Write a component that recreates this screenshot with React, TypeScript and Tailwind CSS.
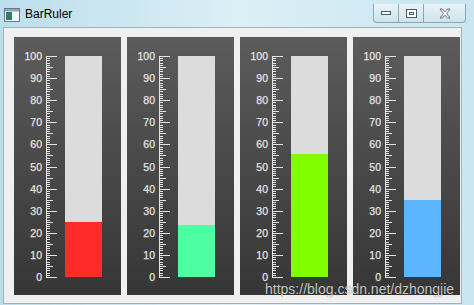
import React from "react";

type Gauge = {
  value: number;
  color: string;
};

const gauges: Gauge[] = [
  { value: 25, color: "#ff2a2a" },
  { value: 23.5, color: "#4dffa0" },
  { value: 55.5, color: "#80ff00" },
  { value: 35, color: "#5cb6ff" },
];

const BAR_HEIGHT = 221;
const TOP = 8;

function Ruler() {
  const step = BAR_HEIGHT / 100;
  const ticks = [];
  for (let i = 0; i <= 100; i++) {
    const y = Math.round(TOP + (100 - i) * step) + 0.5;
    const len = i % 10 === 0 ? 11 : i % 5 === 0 ? 7 : 4;
    ticks.push(
      <line key={i} x1={32} x2={32 + len} y1={y} y2={y} stroke="#e4e4e4" strokeWidth={1} />
    );
  }
  const labels = [];
  for (let v = 0; v <= 100; v += 10) {
    const y = TOP + (100 - v) * step;
    labels.push(
      <text
        key={v}
        x={28}
        y={y + 4}
        textAnchor="end"
        fontSize={10.5}
        fill="#e2e2e2"
        stroke="#e2e2e2"
        strokeWidth={0.25}
        fontFamily="'Liberation Sans', Arial, sans-serif"
      >
        {v}
      </text>
    );
  }
  return (
    <svg width={51} height={BAR_HEIGHT + 16} className="shrink-0">
      <line x1={32.5} x2={32.5} y1={TOP} y2={TOP + BAR_HEIGHT + 1} stroke="#e4e4e4" strokeWidth={1} />
      {ticks}
      {labels}
    </svg>
  );
}

function GaugePanel({ value, color }: Gauge) {
  return (
    <div className="flex h-[258px] w-[107px] shrink-0 items-start bg-gradient-to-b from-[#5c5c5c] to-[#363636] pt-[11px]">
      <Ruler />
      <div className="mt-[8px] flex h-[221px] w-[37px] flex-col justify-end bg-[#dcdcdc]">
        <div style={{ height: `${value}%`, backgroundColor: color }} />
      </div>
    </div>
  );
}

function AppIcon() {
  return (
    <svg width={16} height={14} viewBox="0 0 16 14">
      <rect x={0.5} y={0.5} width={15} height={13} fill="#f4f6f8" stroke="#6b7785" />
      <rect x={1} y={1} width={14} height={2.5} fill="#8fa7bd" />
      <rect x={2} y={4} width={6} height={8} fill="#2f7d6a" />
    </svg>
  );
}

function CaptionButtons() {
  return (
    <div className="flex h-[19px] self-start">
      <div className="flex w-[26px] items-center justify-center rounded-bl-[4px] border border-t-0 border-[#8ea6b4] bg-gradient-to-b from-[#e9f4f8] to-[#cfe3ec]">
        <div className="h-[4px] w-[10px] border border-[#4a5a66] bg-white" />
      </div>
      <div className="flex w-[25px] items-center justify-center border border-l-0 border-t-0 border-[#8ea6b4] bg-gradient-to-b from-[#e9f4f8] to-[#cfe3ec]">
        <div className="flex h-[9px] w-[11px] items-center justify-center border border-[#4a5a66] bg-white">
          <div className="h-[3px] w-[5px] border border-[#4a5a66]" />
        </div>
      </div>
      <div className="flex w-[42px] items-center justify-center rounded-br-[4px] border border-l-0 border-t-0 border-[#8ea6b4] bg-gradient-to-b from-[#e9f4f8] to-[#cfe3ec]">
        <svg width={12} height={11} viewBox="0 0 12 11">
          <path
            d="M1 1 L3.5 1 L6 3.8 L8.5 1 L11 1 L7.5 5.5 L11 10 L8.5 10 L6 7.2 L3.5 10 L1 10 L4.5 5.5 Z"
            fill="#fdfdfd"
            stroke="#56646e"
            strokeWidth={0.9}
          />
        </svg>
      </div>
    </div>
  );
}

export default function App() {
  return (
    <div
      className="relative flex h-[305px] w-[474px] flex-col overflow-hidden bg-gradient-to-r from-[#bcdeec] via-[#dbeff6] to-[#c9e6f0]"
      style={{ fontFamily: "'Liberation Sans', Arial, sans-serif" }}
    >
      <div className="flex h-[27px] shrink-0 items-center pr-[8px]">
        <div className="ml-[4px] mt-[2px]">
          <AppIcon />
        </div>
        <span className="ml-[5px] mt-[1px] text-[12px] text-black">BarRuler</span>
        <div className="ml-auto">
          <CaptionButtons />
        </div>
      </div>
      <div className="ml-[3px] h-[277px] w-[459px] border border-[#9fb3bf] bg-[#f0f0f0] pl-[10px] pt-[9px]">
        <div className="flex gap-[6px]">
          {gauges.map((g, i) => (
            <GaugePanel key={i} value={g.value} color={g.color} />
          ))}
        </div>
      </div>
      <div
        className="absolute left-[265px] top-[281px] text-[14px] leading-[16px] text-white/75"
        style={{ textShadow: "0 0 1px rgba(0,0,0,0.55)" }}
      >
        https://blog.csdn.net/dzhongjie
      </div>
    </div>
  );
}
